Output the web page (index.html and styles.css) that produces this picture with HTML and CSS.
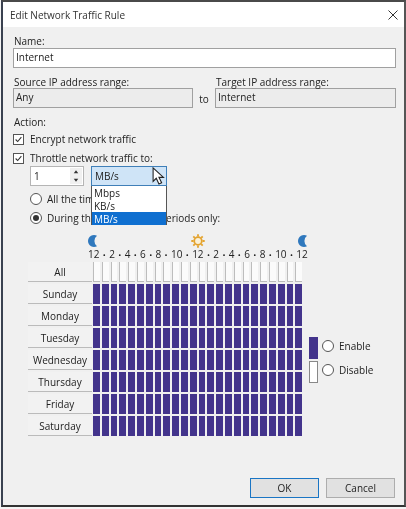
FILE: index.html
```html
<!DOCTYPE html>
<html lang="en">
<head>
<meta charset="utf-8">
<title>Edit Network Traffic Rule</title>
<link rel="stylesheet" href="styles.css">
</head>
<body>
<div class="window">
  <header class="titlebar">
    <span>Edit Network Traffic Rule</span>
    <svg class="close" viewBox="0 0 10 10"><path d="M0.5 0.5L9.5 9.5M9.5 0.5L0.5 9.5"/></svg>
  </header>
  <main class="content">
    <div class="label">Name:</div>
    <div class="field white">Internet</div>
    <div class="ranges">
      <div class="range">
        <div class="label short">Source IP address range:</div>
        <div class="field">Any</div>
      </div>
      <div class="to">to</div>
      <div class="range">
        <div class="label short">Target IP address range:</div>
        <div class="field">Internet</div>
      </div>
    </div>
    <div class="label action">Action:</div>
    <div class="check first"><svg class="box" viewBox="0 0 11 11"><path d="M2 5.500L4.500 8L9 2.500"/></svg>Encrypt network traffic</div>
    <div class="check second"><svg class="box" viewBox="0 0 11 11"><path d="M2 5.500L4.500 8L9 2.500"/></svg>Throttle network traffic to:</div>
    <div class="throttle">
      <div class="spin">
        <span>1</span>
        <div class="arrows">
          <svg viewBox="0 0 9 9"><path d="M4.500 2.500L7 6H2z"/></svg>
          <svg viewBox="0 0 9 9"><path d="M2 3H7L4.500 6.500z"/></svg>
        </div>
      </div>
      <div class="combo">
        MB/s
        <div class="menu">
          <div class="opt">Mbps</div>
          <div class="opt">KB/s</div>
          <div class="opt sel">MB/s</div>
        </div>
        <svg class="cursor" viewBox="0 0 14 20"><path d="M1 1V16L4.500 12.500L7.500 19L10.500 17.500L7.500 11.500H12.500z"/></svg>
      </div>
    </div>
    <div class="radio r1"><i class="dot"></i><span>All the tim</span></div>
    <div class="radio r2"><i class="dot on"></i><span class="during">During th</span><span>periods only:</span></div>
    <div class="schedule">
      <div class="icons">
        <svg class="moon" viewBox="0 0 10 12"><path d="M9 0.800A6 6 0 1 0 9 11.200A6.500 6.500 0 0 1 9 0.800z"/></svg>
        <svg class="sun" viewBox="0 0 14 14"><circle cx="7" cy="7" r="3.800"/><path d="M7 0.300V2.500M7 11.500V13.700M0.300 7H2.500M11.500 7H13.700M2.300 2.300L3.800 3.800M10.200 10.200L11.700 11.700M2.300 11.700L3.800 10.200M10.200 3.800L11.700 2.300"/></svg>
        <svg class="moon" viewBox="0 0 10 12"><path d="M9 0.800A6 6 0 1 0 9 11.200A6.500 6.500 0 0 1 9 0.800z"/></svg>
      </div>
      <div class="hours">
        <span>12</span><b>•</b><span>2</span><b>•</b><span>4</span><b>•</b><span>6</span><b>•</b><span>8</span><b>•</b><span>10</span><b>•</b><span>12</span><b>•</b><span>2</span><b>•</b><span>4</span><b>•</b><span>6</span><b>•</b><span>8</span><b>•</b><span>10</span><b>•</b><span>12</span>
      </div>
      <div class="middle">
        <div class="grid" id="grid"></div>
        <div class="legend">
          <div class="swatches"><i class="sw purple"></i><i class="sw"></i></div>
          <div class="legend-opts">
            <div class="radio plain"><i class="dot"></i>Enable</div>
            <div class="radio plain"><i class="dot"></i>Disable</div>
          </div>
        </div>
      </div>
    </div>
    <footer class="buttons">
      <button class="btn primary">OK</button>
      <button class="btn">Cancel</button>
    </footer>
  </main>
</div>
<script>
  var days = ["All","Sunday","Monday","Tuesday","Wednesday","Thursday","Friday","Saturday"];
  var html = "";
  days.forEach(function (d, i) {
    html += '<div class="row"><div class="day">' + d + '</div><div class="cells' + (i === 0 ? ' empty' : '') + '">';
    for (var c = 0; c < 24; c++) html += '<i></i>';
    html += '</div></div>';
  });
  document.getElementById("grid").innerHTML = html;
</script>
</body>
</html>
```
FILE: styles.css
```css
* { box-sizing: border-box; }
html, body { margin: 0; height: 100%; background: #f4f4f4; }
body { font-family: "Open Sans", "Noto Sans", sans-serif; font-size: 10px; color: #222; overflow: hidden; }
.window { width: 405px; height: 507px; margin-left: 1px; border-top: 2px solid #4a4a4a; border-left: 2px solid #3a4150; border-right: 2px solid #555; border-bottom: 2px solid #333; background: #f0f0f0; display: flex; flex-direction: column; filter: blur(0.3px); }
.titlebar { height: 25px; flex: none; background: #fff; display: flex; align-items: center; justify-content: space-between; padding: 1px 6px 0 7px; font-size: 10px; color: #333; }
.close { width: 10px; height: 10px; fill: none; stroke: #333; stroke-width: 1; }
.content { flex: 1; display: flex; flex-direction: column; padding: 7px 8px 0 10px; }
.label { height: 14px; line-height: 14px; padding-left: 1px; }
.label.short { height: 12px; line-height: 12px; }
.field { height: 20px; line-height: 17px; border: 1px solid #a0a0a0; padding-left: 2px; background: #ececec; }
.field.white { background: #fff; }
.ranges { display: flex; margin-top: 8px; }
.range { flex: 1; }
.range:first-child { flex: 0 0 180px; }
.to { width: 22px; text-align: center; padding-top: 15px; line-height: 16px; }
.action { margin-top: 7px; }
.check { display: flex; align-items: center; gap: 6px; height: 14px; margin-top: 3px; }
.check.second { margin-top: 5px; }
.box { width: 11px; height: 11px; background: #fff; border: 1px solid #555; fill: none; stroke: #333; stroke-width: 1.300; flex: none; }
.throttle { display: flex; gap: 7px; margin: 1px 0 0 17px; height: 20px; }
.spin { width: 54px; border: 1px solid #b5b5b5; background: #fff; display: flex; justify-content: space-between; padding: 1px 1px 1px 3px; line-height: 16px; }
.arrows { width: 12px; background: #f0f0f0; display: flex; flex-direction: column; }
.arrows svg { width: 100%; height: 8px; fill: #333; }
.combo { position: relative; width: 76px; border: 1px solid #3f7fb8; background: #cfe4f7; padding-left: 3px; line-height: 18px; z-index: 2; }
.menu { position: absolute; left: -1px; top: 19px; width: 76px; background: #fff; border: 1px solid #555; border-top: 0; border-bottom: 0; line-height: 14px; }
.opt { height: 13px; padding-left: 2px; }
.opt.sel { background: #0f6fd0; color: #fff; }
.cursor { position: absolute; left: 60px; top: 0; width: 13px; height: 18px; fill: #fff; stroke: #222; stroke-width: 1.200; }
.radio { display: flex; align-items: center; gap: 5px; height: 14px; }
.radio.r1 { margin: 6px 0 0 17px; }
.radio.r2 { margin: 5px 0 0 17px; }
.during { width: 108px; }
.dot { width: 12px; height: 12px; border: 1px solid #555; border-radius: 50%; background: #fff; flex: none; display: flex; align-items: center; justify-content: center; }
.dot.on::after { content: ""; width: 6px; height: 6px; border-radius: 50%; background: #333; }
.schedule { margin-top: 10px; }
.icons { display: flex; justify-content: space-between; margin-left: 75px; width: 220px; height: 13px; align-items: flex-start; }
.moon { width: 10px; height: 12px; fill: #2f78bd; }
.sun { width: 14px; height: 14px; margin-top: -1px; fill: #fbf1d8; stroke: #e3a32f; stroke-width: 1.800; }
.hours { display: flex; justify-content: space-between; align-items: center; margin-left: 75px; width: 220px; height: 12px; font-size: 10px; }
.hours b { font-weight: 400; font-size: 8px; }
.middle { display: flex; margin-top: 2px; }
.grid { display: flex; flex-direction: column; gap: 2px; margin-left: 15px; }
.row { display: flex; height: 20px; }
.day { width: 64px; background: #f2f2f2; border-bottom: 1px solid #bbb; text-align: center; line-height: 21px; }
.cells { display: flex; gap: 2px; width: 210px; padding-left: 1px; }
.cells i { flex: 1; background: #43348c; }
.cells.empty i { background: #fbfbfb; border-left: 1px solid #bdbdbd; border-bottom: 1px solid #bbb; }
.legend { display: flex; margin: 75px 0 0 7px; gap: 4px; }
.swatches { display: flex; flex-direction: column; gap: 2px; }
.sw { width: 9px; height: 22px; background: #fff; border: 1px solid #888; }
.sw.purple { background: #43348c; border-color: #43348c; }
.legend-opts { display: flex; flex-direction: column; gap: 10px; padding-top: 2px; }
.buttons { display: flex; justify-content: flex-end; gap: 7px; margin: 42px 1px 0 0; }
.btn { width: 69px; height: 20px; font: inherit; color: #222; background: #e1e1e1; border: 1px solid #adadad; padding: 0; }
.btn.primary { border: 1.500px solid #1a75c4; }
```
